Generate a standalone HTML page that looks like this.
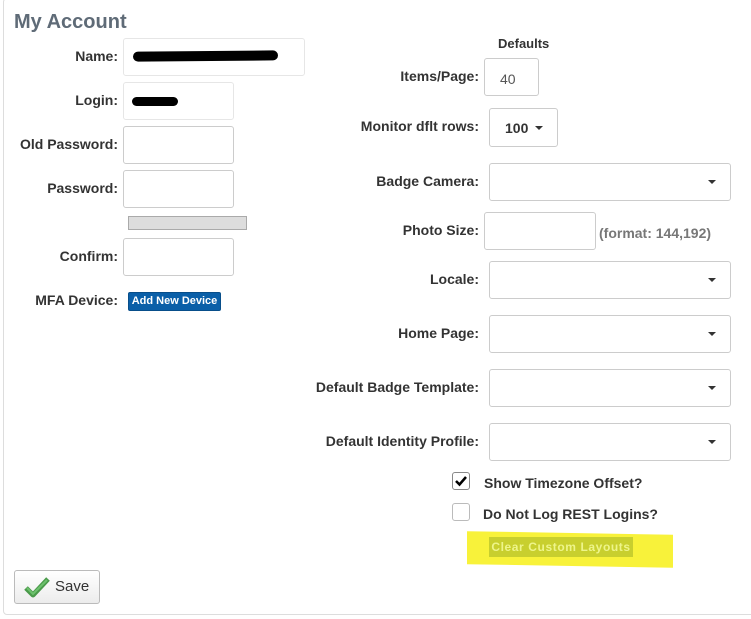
<!DOCTYPE html>
<html><head><meta charset="utf-8"><style>
*{box-sizing:border-box}
body{margin:0;width:751px;height:619px;background:#fff;font-family:"Liberation Sans",Arial,sans-serif;position:relative;overflow:hidden}
.panel{position:absolute;left:3px;top:-2px;width:760px;height:617px;border:1px solid #ddd;border-radius:4px}
.a{position:absolute}
.lbl{position:absolute;font-size:14px;font-weight:bold;color:#333;text-align:right}
.in{position:absolute;border:1px solid #ccc;border-radius:3px;background:#fff}
.ro{border-color:#e6e6e6}
.car{position:absolute;right:14px;top:16px;width:0;height:0;border-left:4px solid transparent;border-right:4px solid transparent;border-top:4px solid #333}
</style></head><body>
<div class="panel"></div>
<div class="a" style="left:14px;top:11px;font-size:20px;font-weight:bold;color:#5f6b77">My Account</div>

<div class="lbl" style="right:633px;top:48px">Name:</div>
<div class="in ro" style="left:123px;top:38px;width:182px;height:38px"></div>
<div class="a" style="left:133px;top:51px;width:145px;height:10px;background:#000;border-radius:5px;transform:rotate(-0.5deg)"></div>
<div class="lbl" style="right:633px;top:92px">Login:</div>
<div class="in ro" style="left:123px;top:82px;width:111px;height:38px"></div>
<div class="a" style="left:132px;top:97px;width:46px;height:9px;background:#000;border-radius:5px"></div>
<div class="lbl" style="right:633px;top:136px">Old Password:</div>
<div class="in" style="left:123px;top:126px;width:111px;height:38px"></div>
<div class="lbl" style="right:633px;top:180px">Password:</div>
<div class="in" style="left:123px;top:170px;width:111px;height:38px"></div>
<div class="a" style="left:128px;top:216px;width:119px;height:14px;background:#ddd;border:1px solid #aaa"></div>
<div class="lbl" style="right:633px;top:248px">Confirm:</div>
<div class="in" style="left:123px;top:238px;width:111px;height:38px"></div>
<div class="lbl" style="right:633px;top:292px">MFA Device:</div>
<div class="a" style="left:128px;top:292px;width:93px;height:19px;background:#0a5fa8;border:1px solid #084e8a;border-radius:2px;color:#fff;font-size:11px;font-weight:bold;line-height:17px;text-align:center">Add New Device</div>

<div class="lbl" style="left:498px;top:36px;font-size:13px">Defaults</div>
<div class="lbl" style="right:272px;top:68px">Items/Page:</div>
<div class="in" style="left:484px;top:58px;width:55px;height:38px;font-size:14px;color:#555;padding:12px 0 0 15px">40</div>
<div class="lbl" style="right:272px;top:118px">Monitor dflt rows:</div>
<div class="in" style="left:489px;top:108px;width:69px;height:39px;font-size:14px;font-weight:bold;color:#333;padding:11px 0 0 15px">100<div class="car" style="right:14px;top:17px"></div></div>
<div class="lbl" style="right:272px;top:173px">Badge Camera:</div>
<div class="in" style="left:489px;top:163px;width:242px;height:38px"><div class="car"></div></div>
<div class="lbl" style="right:272px;top:222px">Photo Size:</div>
<div class="in" style="left:484px;top:212px;width:112px;height:38px"></div>
<div class="a" style="left:599px;top:225px;font-size:14px;font-weight:bold;color:#777">(format: 144,192)</div>
<div class="lbl" style="right:272px;top:271px">Locale:</div>
<div class="in" style="left:489px;top:261px;width:242px;height:38px"><div class="car"></div></div>
<div class="lbl" style="right:272px;top:325px">Home Page:</div>
<div class="in" style="left:489px;top:315px;width:242px;height:38px"><div class="car"></div></div>
<div class="lbl" style="right:272px;top:379px">Default Badge Template:</div>
<div class="in" style="left:489px;top:369px;width:242px;height:38px"><div class="car"></div></div>
<div class="lbl" style="right:272px;top:433px">Default Identity Profile:</div>
<div class="in" style="left:489px;top:423px;width:242px;height:38px"><div class="car"></div></div>

<div class="in" style="left:452px;top:472px;width:18px;height:18px;border-color:#888"></div>
<svg class="a" style="left:454px;top:474px" width="14" height="14"><path d="M2 7 L5.5 10.5 L12 3" stroke="#000" stroke-width="2.5" fill="none"/></svg>
<div class="lbl" style="left:484px;top:475px">Show Timezone Offset?</div>
<div class="in" style="left:452px;top:503px;width:18px;height:18px;border-color:#bbb"></div>
<div class="lbl" style="left:483px;top:506px">Do Not Log REST Logins?</div>
<div class="a" style="left:467px;top:533px;width:206px;height:33px;background:#f8f23a;transform:skewY(1deg)"></div>
<div class="a" style="left:489px;top:537px;width:144px;height:20px;background:#c8cf2e;color:#eef58a;font-size:12px;font-weight:bold;line-height:20px;text-align:center;letter-spacing:0.6px;white-space:nowrap">Clear Custom Layouts</div>

<div class="a" style="left:14px;top:570px;width:86px;height:34px;border:1px solid #bbb;border-radius:3px;background:linear-gradient(#fff,#ececec)"></div>
<svg class="a" style="left:24px;top:576px" width="26" height="22"><path d="M2 12 L9 19 L24 3" stroke="#4a9a4a" stroke-width="5" fill="none" stroke-linejoin="round"/><path d="M3 12 L9 18 L23 4" stroke="#6cc16c" stroke-width="2" fill="none"/></svg>
<div class="a" style="left:55px;top:578px;font-size:15px;color:#333">Save</div>
</body></html>
